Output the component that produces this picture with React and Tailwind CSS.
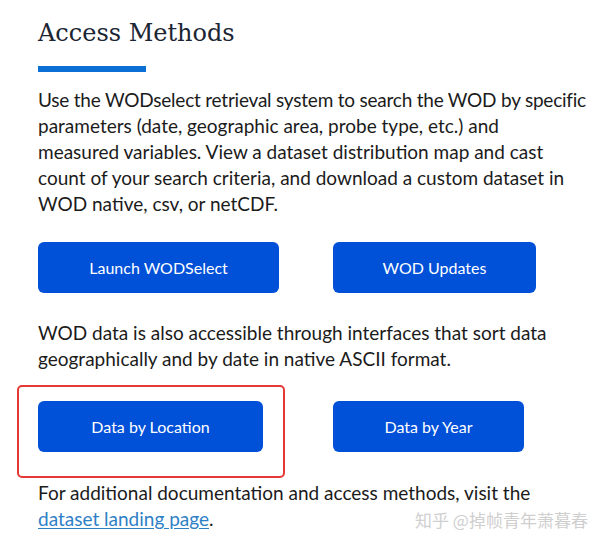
export default function App() {
  const body = "text-[#1b1b1b] text-[19px] leading-[26px] whitespace-nowrap";
  const btn =
    "h-[51px] rounded-[6px] bg-[#0050d8] text-white text-[16px] flex items-center justify-center";
  return (
    <div
      className="relative w-[600px] h-[543px] bg-white overflow-hidden pl-[38px] pt-[14px]"
      style={{ fontFamily: "Lato, 'Noto Sans', sans-serif" }}
    >
      <h2
        className="text-[#1c2533] text-[24px] leading-[38px]"
        style={{ fontFamily: "'DejaVu Serif', serif" }}
      >
        Access Methods
      </h2>
      <div className="mt-[14px] w-[108px] h-[6px] bg-[#0b6fd6]" />
      <p className={`${body} mt-[15px]`}>
        <span className="tracking-[-0.22px]">
          Use the WODselect retrieval system to search the WOD by specific
        </span>
        <br />
        parameters (date, geographic area, probe type, etc.) and
        <br />
        measured variables. View a dataset distribution map and cast
        <br />
        count of your search criteria, and download a custom dataset in
        <br />
        WOD native, csv, or netCDF.
      </p>
      <div className="mt-[25px] grid grid-cols-[295px_auto]">
        <div className={`${btn} w-[241px]`}>Launch WODSelect</div>
        <div className={`${btn} w-[203px]`}>WOD Updates</div>
      </div>
      <p className={`${body} mt-[27px]`}>
        WOD data is also accessible through interfaces that sort data
        <br />
        geographically and by date in native ASCII format.
      </p>
      <div className="relative mt-[29px] grid grid-cols-[295px_auto]">
        <div className={`${btn} w-[225px]`}>Data by Location</div>
        <div className={`${btn} w-[191px]`}>Data by Year</div>
        <div className="absolute left-[-21px] top-[-16px] w-[268px] h-[93px] border-2 border-[#e53935] rounded-[5px]" />
      </div>
      <p className={`${body} mt-[28px]`}>
        For additional documentation and access methods, visit the
        <br />
        <span className="text-[#2e80c6] underline underline-offset-2">
          dataset landing page
        </span>
        .
      </p>
      <div
        className="absolute left-[415px] top-[508px] text-[17px] leading-[24px] text-[#cfcfcf] whitespace-nowrap"
        style={{ fontFamily: "'Noto Sans CJK SC', sans-serif" }}
      >
        知乎 @掉帧青年萧暮春
      </div>
    </div>
  );
}
